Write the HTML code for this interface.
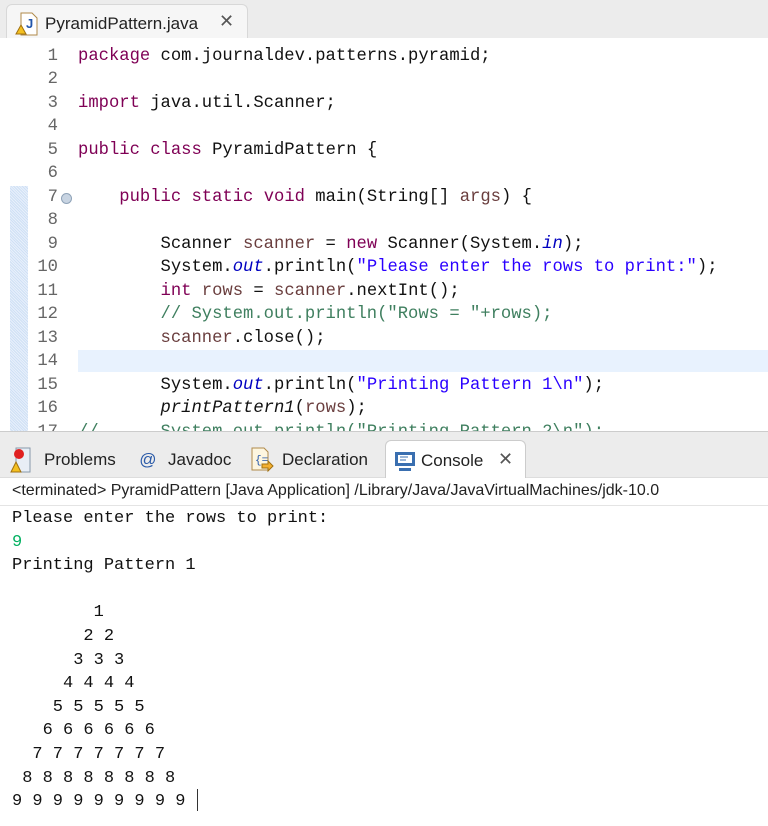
<!DOCTYPE html>
<html><head><meta charset="utf-8"><style>
*{margin:0;padding:0;box-sizing:border-box}
body{width:768px;height:826px;overflow:hidden;background:#fff;position:relative;font-family:"Liberation Sans",sans-serif}
.top{position:absolute;left:0;top:0;width:768px;height:38px;background:#ececec}
.ftab{position:absolute;left:6px;top:4px;width:242px;height:36px;background:#f6f6f6;border:1px solid #d8d8d8;border-bottom:none;border-radius:6px 6px 0 0}
.ftab span{position:absolute;left:38px;top:9px;font-size:17px;color:#222}
.ed{position:absolute;left:0;top:38px;width:768px;height:394px;background:#fff;overflow:hidden;border-bottom:1px solid #ccc}
.ln,.cd{position:absolute;font-family:"Liberation Mono",monospace;font-size:17.2px;white-space:pre;line-height:23.47px}
.ln{color:#666;text-align:right;width:58px;left:0}
.cd{left:78px;color:#111}
.k{color:#7f0055}.s{color:#2a00ff}.c{color:#3f7f5f}.f{color:#0000c0;font-style:italic}.v{color:#6a3e3e}.i{font-style:italic}
.gut{position:absolute;left:10px;width:18px;background:repeating-linear-gradient(45deg,#cfe0f5 0 1px,#e8f0fb 1px 2px)}
.panel{position:absolute;left:0;top:432px;width:768px;height:46px;background:#ececec;border-bottom:1px solid #ddd}
.ct{position:absolute;left:385px;top:8px;width:141px;height:39px;background:#fff;border:1px solid #ccc;border-bottom:none;border-radius:6px 6px 0 0}
.tl{position:absolute;top:18px;font-size:17px;color:#222}
.con{position:absolute;left:12px;font-family:"Liberation Mono",monospace;font-size:17px;white-space:pre;color:#111}
</style></head><body>
<div class="top"><div class="ftab">
<svg style="position:absolute;left:8px;top:6px" width="26" height="26" viewBox="0 0 26 26"><path d="M6 2h11l5 5v17H6z" fill="#fff" stroke="#b08a4a"/><text x="11" y="17" font-size="13" font-weight="bold" fill="#2255aa" font-family="Liberation Sans">J</text><path d="M6 14l5 9H1z" fill="#f4c020" stroke="#a07010"/></svg>
<span>PyramidPattern.java</span><span style="left:212px;top:6px;font-size:18px;color:#555">✕</span></div></div>
<div class="ed">
<div class="gut" style="top:148px;height:246px"></div>
<div style="position:absolute;left:78px;top:312px;width:690px;height:22px;background:#e8f2fe"></div>
<div class="ln" style="top:7px">1
2
3
4
5
6
7
8
9
10
11
12
13
14
15
16
17</div>
<div style="position:absolute;left:61px;top:155px;width:11px;height:11px;border-radius:50%;background:#c8d4e2;border:1px solid #8fa3b8"></div>
<div class="cd" style="top:7px"><span class="k">package</span> com.journaldev.patterns.pyramid;

<span class="k">import</span> java.util.Scanner;

<span class="k">public</span> <span class="k">class</span> PyramidPattern {

    <span class="k">public</span> <span class="k">static</span> <span class="k">void</span> main(String[] <span class="v">args</span>) {

        Scanner <span class="v">scanner</span> = <span class="k">new</span> Scanner(System.<span class="f">in</span>);
        System.<span class="f">out</span>.println(<span class="s">"Please enter the rows to print:"</span>);
        <span class="k">int</span> <span class="v">rows</span> = <span class="v">scanner</span>.nextInt();
        <span class="c">// System.out.println("Rows = "+rows);</span>
        <span class="v">scanner</span>.close();

        System.<span class="f">out</span>.println(<span class="s">"Printing Pattern 1\n"</span>);
        <span class="i">printPattern1</span>(<span class="v">rows</span>);
<span class="c">//      System.out.println("Printing Pattern 2\n");</span></div>
</div>
<div class="panel">
<svg style="position:absolute;left:10px;top:14px" width="26" height="28" viewBox="0 0 26 28"><rect x="6" y="2" width="14" height="24" fill="#e8eef6" stroke="#8899aa"/><circle cx="9" cy="8" r="5" fill="#e02020"/><path d="M6 16l5 10H1z" fill="#f4c020" stroke="#a07010"/></svg>
<span class="tl" style="left:44px">Problems</span>
<span class="tl" style="left:139px;color:#2a5aa8;font-style:italic">@</span>
<span class="tl" style="left:168px">Javadoc</span>
<svg style="position:absolute;left:248px;top:14px" width="26" height="28" viewBox="0 0 26 28"><path d="M4 2h12l4 4v18H4z" fill="#fdf6e0" stroke="#b08a4a"/><text x="7" y="17" font-size="11" fill="#2255aa" font-family="Liberation Mono">{=</text><path d="M14 18h6v-3l5 5-5 5v-3h-6z" fill="#f4b030" stroke="#a07010"/></svg>
<span class="tl" style="left:282px">Declaration</span>
<div class="ct">
<svg style="position:absolute;left:8px;top:9px" width="22" height="22" viewBox="0 0 22 22"><rect x="1" y="2" width="20" height="14" fill="#3a6fb0"/><rect x="4" y="5" width="14" height="8" fill="#fff"/><path d="M6 7h8M6 10h6" stroke="#3a6fb0"/><rect x="5" y="18" width="12" height="3" fill="#3a6fb0"/></svg>
<span class="tl" style="left:35px;top:10px">Console</span>
<span class="tl" style="left:112px;top:8px;font-size:18px;color:#555">✕</span></div>
</div>
<div style="position:absolute;left:0;top:478px;width:768px;height:348px;background:#fff"></div>
<div style="position:absolute;left:12px;top:482px;font-size:16px;color:#222;white-space:nowrap">&lt;terminated&gt; PyramidPattern [Java Application] /Library/Java/JavaVirtualMachines/jdk-10.0</div>
<div style="position:absolute;left:0;top:505px;width:768px;height:1px;background:#e4e4e4"></div>
<div class="con" style="top:507px;line-height:23.6px">Please enter the rows to print:
<span style="color:#00b060">9</span>
Printing Pattern 1

        1
       2 2
      3 3 3
     4 4 4 4
    5 5 5 5 5
   6 6 6 6 6 6
  7 7 7 7 7 7 7
 8 8 8 8 8 8 8 8
9 9 9 9 9 9 9 9 9</div>
<div style="position:absolute;left:197px;top:789px;width:1px;height:22px;background:#333"></div>
</body></html>
